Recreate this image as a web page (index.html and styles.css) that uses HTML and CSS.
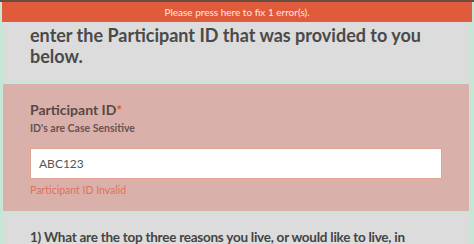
FILE: index.html
```html
<!DOCTYPE html>
<html>
<head>
<meta charset="utf-8">
<link rel="stylesheet" href="styles.css">
</head>
<body>
<div class="page">
  <div class="topline"></div>
  <div class="banner">Please press here to fix 1 error(s).</div>
  <div class="card intro">
    <h1 class="heading">enter the Participant ID that was provided to you below.</h1>
  </div>
  <div class="card error">
    <div class="label">Participant ID<span class="req">*</span></div>
    <div class="hint">ID's are Case Sensitive</div>
    <div class="input">ABC123</div>
    <div class="errmsg">Participant ID Invalid</div>
  </div>
  <div class="card question">
    <div class="qtext">1) What are the top three reasons you live, or would like to live, in</div>
  </div>
</div>
</body>
</html>
```
FILE: styles.css
```css
html, body {
  margin: 0;
  padding: 0;
}
body {
  width: 474px;
  height: 244px;
  overflow: hidden;
  background: #c6e6d6;
  font-family: Lato, "Open Sans", sans-serif;
}
.page {
  display: flex;
  flex-direction: column;
  height: 244px;
  padding: 0 5px 0 3px;
  box-sizing: border-box;
}
.topline {
  height: 2px;
  margin: 0 -5px 0 -3px;
  background: #6a4c42;
}
.banner {
  height: 20px;
  margin: 0 -3px 0 -1px;
  background: #df5b3c;
  color: #fbe9e2;
  font-size: 10px;
  line-height: 21px;
  text-align: center;
}
.card {
  background: #dcdcdc;
  padding-left: 27px;
  padding-right: 20px;
}
.intro {
  padding-top: 3px;
  height: 56px;
  margin-bottom: 3px;
}
.heading {
  margin: 0;
  font-size: 18px;
  font-weight: 700;
  line-height: 21px;
  color: #4a4a4a;
}
.error {
  background: #d9b1aa;
  padding-top: 17px;
  padding-right: 27px;
  height: 110px;
  margin-bottom: 3px;
}
.label {
  font-size: 14px;
  font-weight: 700;
  color: #5b4644;
  line-height: 18px;
}
.req {
  color: #e0553c;
}
.hint {
  font-size: 10.5px;
  font-weight: 700;
  color: #6b5250;
  line-height: 14px;
  margin-top: 2px;
}
.input {
  margin-top: 13px;
  height: 29px;
  background: #ffffff;
  border: 1px solid #e1a394;
  font-size: 12px;
  color: #555555;
  line-height: 29px;
  padding-left: 8px;
}
.errmsg {
  margin-top: 4px;
  font-size: 10.5px;
  color: #e0705e;
  line-height: 14px;
}
.question {
  flex: 1;
  min-height: 0;
  overflow: hidden;
  padding-top: 14px;
}
.qtext {
  font-size: 13.5px;
  font-weight: 700;
  letter-spacing: -0.25px;
  line-height: 18px;
  color: #444444;
  white-space: nowrap;
}
```
